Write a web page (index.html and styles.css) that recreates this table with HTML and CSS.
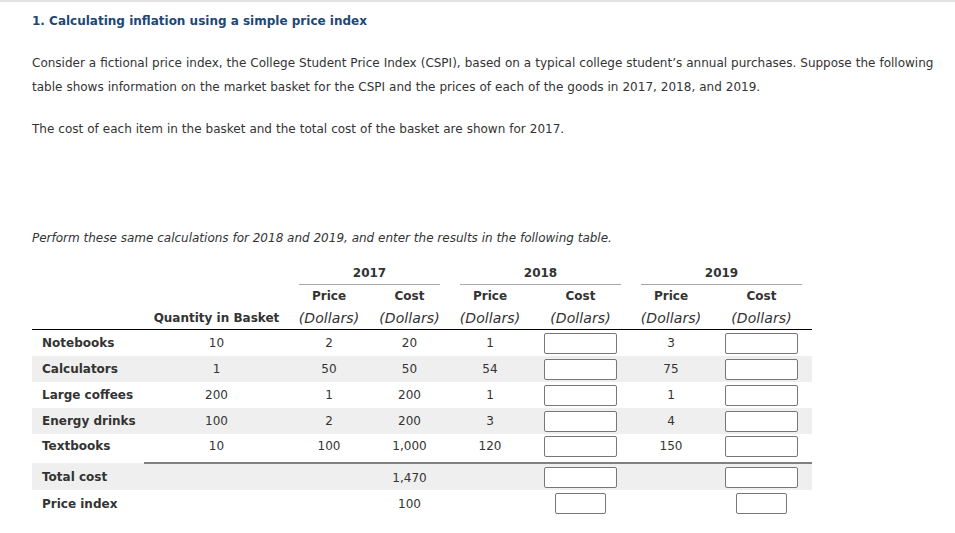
FILE: index.html
```html
<!DOCTYPE html>
<html>
<head>
<meta charset="utf-8">
<link rel="stylesheet" href="styles.css">
</head>
<body>
<div class="page">
  <h1 class="title">1. Calculating inflation using a simple price index</h1>
  <p class="para">Consider a fictional price index, the College Student Price Index (CSPI), based on a typical college student’s annual purchases. Suppose the following table shows information on the market basket for the CSPI and the prices of each of the goods in 2017, 2018, and 2019.</p>
  <p class="para cost-note">The cost of each item in the basket and the total cost of the basket are shown for 2017.</p>
  <p class="para instr">Perform these same calculations for 2018 and 2019, and enter the results in the following table.</p>

  <table class="grid">
    <colgroup>
      <col class="c-label"><col class="c-qty"><col class="c-price"><col class="c-cost17"><col class="c-price"><col class="c-cost"><col class="c-price"><col class="c-cost">
    </colgroup>
    <thead>
      <tr class="h-year">
        <th></th><th></th>
        <th colspan="2"><div class="year">2017</div></th>
        <th colspan="2"><div class="year">2018</div></th>
        <th colspan="2"><div class="year">2019</div></th>
      </tr>
      <tr class="h-sub">
        <th></th><th></th>
        <th>Price</th><th>Cost</th><th>Price</th><th>Cost</th><th>Price</th><th>Cost</th>
      </tr>
      <tr class="h-unit">
        <th></th><th>Quantity in Basket</th>
        <th class="unit">(Dollars)</th><th class="unit">(Dollars)</th><th class="unit">(Dollars)</th><th class="unit">(Dollars)</th><th class="unit">(Dollars)</th><th class="unit">(Dollars)</th>
      </tr>
    </thead>
    <tbody>
      <tr><td class="lbl">Notebooks</td><td>10</td><td>2</td><td>20</td><td>1</td><td><span class="box"></span></td><td>3</td><td><span class="box"></span></td></tr>
      <tr class="alt"><td class="lbl">Calculators</td><td>1</td><td>50</td><td>50</td><td>54</td><td><span class="box"></span></td><td>75</td><td><span class="box"></span></td></tr>
      <tr><td class="lbl">Large coffees</td><td>200</td><td>1</td><td>200</td><td>1</td><td><span class="box"></span></td><td>1</td><td><span class="box"></span></td></tr>
      <tr class="alt"><td class="lbl">Energy drinks</td><td>100</td><td>2</td><td>200</td><td>3</td><td><span class="box"></span></td><td>4</td><td><span class="box"></span></td></tr>
      <tr class="last"><td class="lbl">Textbooks</td><td>10</td><td>100</td><td>1,000</td><td>120</td><td><span class="box"></span></td><td>150</td><td><span class="box"></span></td></tr>
      <tr class="alt total"><td class="lbl">Total cost</td><td class="rule"></td><td class="rule"></td><td class="rule">1,470</td><td class="rule"></td><td class="rule"><span class="box"></span></td><td class="rule"></td><td class="rule"><span class="box"></span></td></tr>
      <tr class="index"><td class="lbl">Price index</td><td></td><td></td><td>100</td><td></td><td><span class="box small"></span></td><td></td><td><span class="box small"></span></td></tr>
    </tbody>
  </table>
</div>
</body>
</html>
```

FILE: styles.css
```css
html, body {
  margin: 0;
  padding: 0;
  background: #ffffff;
}
body {
  font-family: "DejaVu Sans", Verdana, sans-serif;
  font-size: 12px;
  color: #333333;
  border-top: 2px solid #e2e2e2;
}
.page {
  padding: 10px 0 0 32px;
}
.title {
  margin: 0;
  font-size: 12px;
  line-height: 18px;
  font-weight: bold;
  color: #1c4876;
}
.para {
  margin: 21px 0 0 0;
  line-height: 24px;
  width: 915px;
  word-spacing: 0.2px;
}
.cost-note {
  margin-top: 18px;
}
.instr {
  margin-top: 85px;
  font-style: italic;
  word-spacing: 0;
}
.grid {
  margin-top: 13px;
  border-collapse: collapse;
  table-layout: fixed;
  width: 780px;
}
.c-label { width: 112px; }
.c-qty { width: 145px; }
.c-price { width: 80px; }
.c-cost17 { width: 81px; }
.c-cost { width: 101px; }
.grid th, .grid td {
  padding: 0;
  text-align: center;
  white-space: nowrap;
}
.grid th {
  font-weight: bold;
  color: #333333;
}
.h-year th {
  height: 22px;
  vertical-align: top;
}
.year {
  margin: 0 10px;
  height: 21px;
  line-height: 21px;
  border-bottom: 1px solid #a8a8a8;
}
.h-sub th {
  height: 22px;
}
.h-unit th {
  height: 22px;
  border-bottom: 1px solid #000000;
}
.h-unit th.unit {
  font-weight: normal;
  font-style: italic;
  font-size: 14px;
  letter-spacing: 0.1px;
}
.grid td {
  height: 26px;
}
.grid td.lbl {
  text-align: left;
  padding-left: 10px;
  font-weight: bold;
}
.grid tr.alt td {
  background: #efefef;
}
.grid tr.last td {
  height: 29px;
  vertical-align: top;
  box-sizing: border-box;
  line-height: 21px;
  padding-top: 2px;
}
.grid tr.last td.lbl {
  padding-top: 2px;
}
.grid tr.total td {
  height: 27px;
  padding-top: 1px;
  box-sizing: border-box;
}
.grid tr.index td {
  height: 26px;
  padding-top: 1px;
  box-sizing: border-box;
}
.grid td.rule {
  border-top: 2px solid #808080;
}
.box {
  display: inline-block;
  vertical-align: middle;
  width: 73px;
  height: 21px;
  box-sizing: border-box;
  border: 1px solid #777777;
  border-radius: 2px;
  background: #ffffff;
}
.box.small {
  width: 51px;
}
```
